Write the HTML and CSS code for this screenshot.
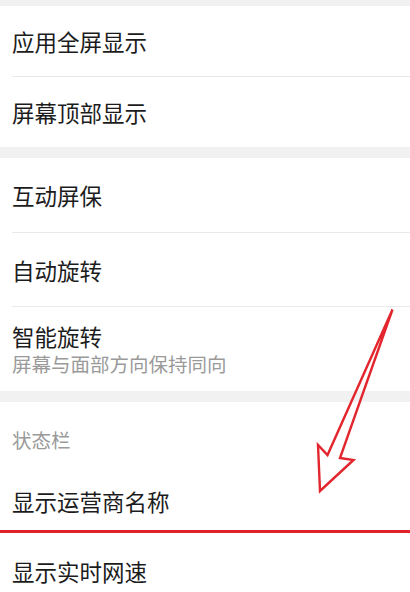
FILE: index.html
```html
<!DOCTYPE html>
<html lang="zh-CN">
<head>
<meta charset="utf-8">
<title>设置</title>
<link rel="stylesheet" href="styles.css">
</head>
<body>
<div class="page">
  <div class="band band-top"></div>
  <section class="group">
    <div class="row row-a">应用全屏显示</div>
    <div class="row row-b">屏幕顶部显示</div>
  </section>
  <div class="band"></div>
  <section class="group">
    <div class="row row-c">互动屏保</div>
    <div class="row row-c">自动旋转</div>
    <div class="row row-d">
      <div class="title">智能旋转</div>
      <div class="sub">屏幕与面部方向保持同向</div>
    </div>
  </section>
  <div class="band"></div>
  <section class="group">
    <div class="header">状态栏</div>
    <div class="row row-e">显示运营商名称</div>
    <div class="row row-f">显示实时网速</div>
  </section>

  <div class="mark-line"></div>
  <svg class="mark-arrow" width="410" height="592" viewBox="0 0 410 592">
    <path d="M392.5 309.5 L340 458 L353.5 460 L320 491 L318 445 L327.5 455 Z" fill="none" stroke="#e3262d" stroke-width="2.4" stroke-linejoin="miter"/>
  </svg>
</div>
</body>
</html>
```

FILE: styles.css
```css
html, body {
  margin: 0;
  padding: 0;
  background: #ffffff;
}

.page {
  position: relative;
  width: 410px;
  height: 592px;
  overflow: hidden;
  font-family: "Noto Sans CJK SC", "Noto Sans", sans-serif;
  color: #1c1c1c;
}

.band {
  height: 11px;
  background: #f1f1f1;
}

.band-top {
  height: 6px;
}

.group {
  background: #ffffff;
}

.row {
  box-sizing: border-box;
  margin-left: 12px;
  display: flex;
  align-items: center;
  font-size: 22.5px;
  line-height: 30px;
  border-top: 1px solid #e9e9e9;
}

.row:first-child,
.header + .row {
  border-top: none;
}

.row-a { height: 70px; }
.row-b { height: 71px; }
.row-c { height: 74px; }
.row-c:first-child { height: 74px; }

.row-d {
  height: 85px;
  flex-direction: column;
  align-items: flex-start;
  justify-content: center;
}

.title {
  font-size: 22.5px;
  line-height: 30px;
}

.sub {
  font-size: 19.5px;
  line-height: 26px;
  color: #9a9a9a;
}

.header {
  box-sizing: border-box;
  height: 68px;
  margin-left: 12px;
  padding-top: 25px;
  font-size: 19.5px;
  line-height: 26px;
  color: #9a9a9a;
}

.row-e { height: 61px; }
.row-f { height: 78px; }

.mark-line {
  position: absolute;
  left: 0;
  top: 530px;
  width: 410px;
  height: 3px;
  background: #e0222b;
}

.mark-arrow {
  position: absolute;
  left: 0;
  top: 0;
  pointer-events: none;
}
```
